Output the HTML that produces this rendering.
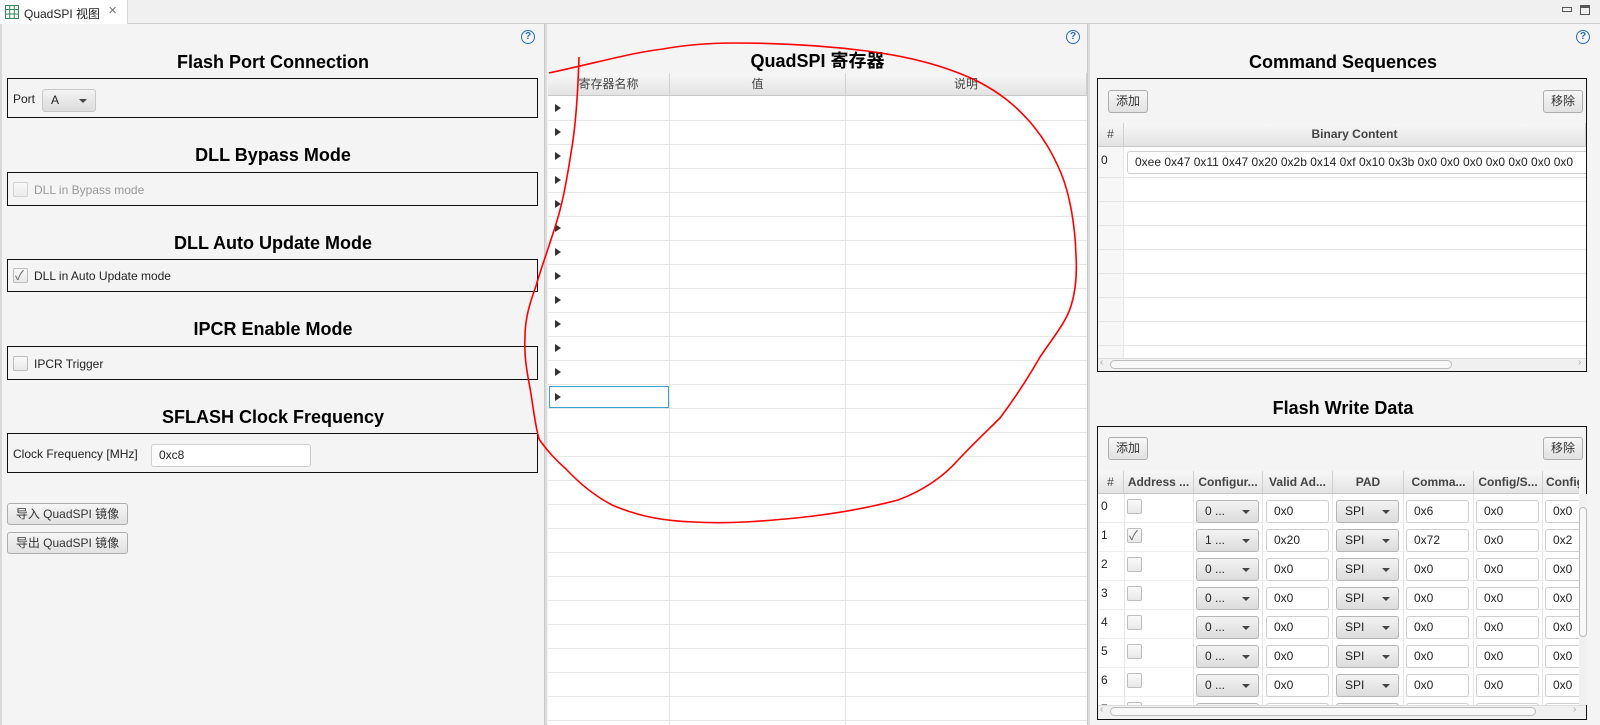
<!DOCTYPE html>
<html><head><meta charset="utf-8">
<style>
*{box-sizing:border-box;margin:0;padding:0}
body{width:1600px;height:725px;overflow:hidden;background:#f4f4f4;font-family:"Liberation Sans","Noto Sans CJK SC",sans-serif;font-size:12px;color:#222;position:relative}
.a{position:absolute}
.title{position:absolute;font-weight:bold;font-size:18px;text-align:center;color:#000;line-height:22px}
.box{position:absolute;border:1px solid #111}
.btn{position:absolute;border:1px solid #adadad;border-radius:3px;background:linear-gradient(#f6f6f6,#e2e2e2);font-size:12px;color:#333;text-align:center;line-height:20px}
.cb{position:absolute;width:15px;height:15px;border:1px solid #bdbdbd;border-radius:2px;background:linear-gradient(#fafafa,#e8e8e8)}
.help{position:absolute;width:14px;height:14px;border:1.5px solid #2b6cb0;border-radius:50%;color:#2b6cb0;font-size:10px;font-weight:bold;text-align:center;line-height:11px}
.hdr{position:absolute;background:linear-gradient(#f7f7f7,#e3e3e3);border-right:1px solid #d0d0d0;border-bottom:1px solid #c8c8c8;font-weight:bold;color:#444;text-align:center;line-height:23px;overflow:hidden;white-space:nowrap}
.hl{position:absolute;height:1px;background:#e6e6e6}
.vl{position:absolute;width:1px;background:#e6e6e6}
.tri{position:absolute;width:0;height:0;border-top:4px solid transparent;border-bottom:4px solid transparent;border-left:6px solid #333}
.tf{position:absolute;background:#fff;border:1px solid #cfcfcf;border-radius:3px;line-height:21px;padding-left:7px;color:#222}
.cmb{position:absolute;border:1px solid #b5b5b5;border-radius:3px;background:linear-gradient(#f3f3f3,#dcdcdc);line-height:21px;padding-left:8px;color:#222}
.cmb:after{content:"";position:absolute;right:8px;top:9px;border-left:4px solid transparent;border-right:4px solid transparent;border-top:4px solid #444}
</style></head><body>

<!-- tab bar -->
<div class="a" style="left:0;top:0;width:1600px;height:24px;background:#f0f0f0;border-bottom:1px solid #cfcfcf"></div>
<div class="a" style="left:0;top:0;width:128px;height:24px;background:#fff;border-right:1px solid #d8d8d8"></div>
<svg class="a" style="left:5px;top:5px" width="14" height="14" viewBox="0 0 14 14"><rect x="0.5" y="0.5" width="13" height="13" fill="#fff" stroke="#2e8b57"/><path d="M0 4.5H14M0 9H14M4.7 0V14M9.3 0V14" stroke="#2e8b57"/></svg>
<div class="a" style="left:24px;top:5px;font-size:12px;color:#222">QuadSPI 视图</div>
<div class="a" style="left:108px;top:4px;font-size:11px;color:#777">✕</div>
<div class="a" style="left:1562px;top:7px;width:10px;height:5px;border:1.5px solid #555"></div>
<div class="a" style="left:1580px;top:5px;width:10px;height:10px;border:1.5px solid #555;border-top-width:3px"></div>

<!-- panel dividers -->
<div class="a" style="left:0;top:24px;width:2px;height:701px;background:#d8d8d8"></div>
<div class="a" style="left:544px;top:24px;width:3px;height:701px;background:#dcdcdc;border-left:1px solid #c8c8c8"></div>
<div class="a" style="left:1087px;top:24px;width:3px;height:701px;background:#dcdcdc;border-left:1px solid #c8c8c8"></div>

<!-- LEFT PANEL -->
<div class="help" style="left:521px;top:30px">?</div>
<div class="title" style="left:2px;top:51px;width:542px">Flash Port Connection</div>
<div class="box" style="left:7px;top:78px;width:531px;height:40px"></div>
<div class="a" style="left:13px;top:92px">Port</div>
<div class="cmb" style="left:42px;top:89px;width:54px;height:23px;border-color:#c8c8c8">A</div>

<div class="title" style="left:2px;top:144px;width:542px">DLL Bypass Mode</div>
<div class="box" style="left:7px;top:172px;width:531px;height:34px"></div>
<div class="cb" style="left:13px;top:182px;opacity:.6"></div>
<div class="a" style="left:34px;top:183px;color:#999">DLL in Bypass mode</div>

<div class="title" style="left:2px;top:232px;width:542px">DLL Auto Update Mode</div>
<div class="box" style="left:7px;top:259px;width:531px;height:33px"></div>
<div class="cb" style="left:13px;top:268px"></div>
<div class="a" style="left:15px;top:265px;font-size:13px;color:#666">✓</div>
<div class="a" style="left:34px;top:269px">DLL in Auto Update mode</div>

<div class="title" style="left:2px;top:318px;width:542px">IPCR Enable Mode</div>
<div class="box" style="left:7px;top:346px;width:531px;height:34px"></div>
<div class="cb" style="left:13px;top:356px"></div>
<div class="a" style="left:34px;top:357px">IPCR Trigger</div>

<div class="title" style="left:2px;top:406px;width:542px">SFLASH Clock Frequency</div>
<div class="box" style="left:7px;top:433px;width:531px;height:40px"></div>
<div class="a" style="left:13px;top:447px">Clock Frequency [MHz]</div>
<div class="tf" style="left:151px;top:444px;width:160px;height:23px">0xc8</div>

<div class="btn" style="left:7px;top:503px;width:121px;height:22px">导入 QuadSPI 镜像</div>
<div class="btn" style="left:7px;top:532px;width:121px;height:22px">导出 QuadSPI 镜像</div>

<!-- MIDDLE PANEL -->
<div class="a" style="left:548px;top:96px;width:539px;height:629px;background:#fff"></div>
<div class="help" style="left:1066px;top:30px">?</div>
<div class="title" style="left:548px;top:50px;width:539px">QuadSPI 寄存器</div>
<div class="hdr" style="left:548px;top:73px;width:122px;height:23px;font-weight:normal">寄存器名称</div>
<div class="hdr" style="left:670px;top:73px;width:176px;height:23px;font-weight:normal">值</div>
<div class="hdr" style="left:846px;top:73px;width:241px;height:23px;font-weight:normal">说明</div>
<div class="vl" style="left:669px;top:96px;height:629px"></div>
<div class="vl" style="left:845px;top:96px;height:629px"></div>
<div class="hl" style="left:548px;top:120px;width:539px"></div>
<div class="hl" style="left:548px;top:144px;width:539px"></div>
<div class="hl" style="left:548px;top:168px;width:539px"></div>
<div class="hl" style="left:548px;top:192px;width:539px"></div>
<div class="hl" style="left:548px;top:216px;width:539px"></div>
<div class="hl" style="left:548px;top:240px;width:539px"></div>
<div class="hl" style="left:548px;top:264px;width:539px"></div>
<div class="hl" style="left:548px;top:288px;width:539px"></div>
<div class="hl" style="left:548px;top:312px;width:539px"></div>
<div class="hl" style="left:548px;top:336px;width:539px"></div>
<div class="hl" style="left:548px;top:360px;width:539px"></div>
<div class="hl" style="left:548px;top:384px;width:539px"></div>
<div class="hl" style="left:548px;top:408px;width:539px"></div>
<div class="hl" style="left:548px;top:432px;width:539px"></div>
<div class="hl" style="left:548px;top:456px;width:539px"></div>
<div class="hl" style="left:548px;top:480px;width:539px"></div>
<div class="hl" style="left:548px;top:504px;width:539px"></div>
<div class="hl" style="left:548px;top:528px;width:539px"></div>
<div class="hl" style="left:548px;top:552px;width:539px"></div>
<div class="hl" style="left:548px;top:576px;width:539px"></div>
<div class="hl" style="left:548px;top:600px;width:539px"></div>
<div class="hl" style="left:548px;top:624px;width:539px"></div>
<div class="hl" style="left:548px;top:648px;width:539px"></div>
<div class="hl" style="left:548px;top:672px;width:539px"></div>
<div class="hl" style="left:548px;top:696px;width:539px"></div>
<div class="hl" style="left:548px;top:720px;width:539px"></div>
<div class="tri" style="left:555px;top:104px"></div>
<div class="tri" style="left:555px;top:128px"></div>
<div class="tri" style="left:555px;top:152px"></div>
<div class="tri" style="left:555px;top:176px"></div>
<div class="tri" style="left:555px;top:200px"></div>
<div class="tri" style="left:555px;top:224px"></div>
<div class="tri" style="left:555px;top:248px"></div>
<div class="tri" style="left:555px;top:272px"></div>
<div class="tri" style="left:555px;top:296px"></div>
<div class="tri" style="left:555px;top:320px"></div>
<div class="tri" style="left:555px;top:344px"></div>
<div class="tri" style="left:555px;top:368px"></div>
<div class="a" style="left:549px;top:386px;width:120px;height:22px;border:1px solid #3ca0d0;background:#fff"></div>
<div class="tri" style="left:555px;top:393px"></div>

<!-- RIGHT PANEL -->
<div class="help" style="left:1576px;top:30px">?</div>
<div class="title" style="left:1090px;top:51px;width:506px">Command Sequences</div>
<div class="box" style="left:1097px;top:78px;width:490px;height:294px"></div>
<div class="btn" style="left:1108px;top:90px;width:40px;height:23px">添加</div>
<div class="btn" style="left:1543px;top:90px;width:40px;height:23px">移除</div>
<div class="a" style="left:1098px;top:123px;width:488px;height:235px;background:#fff;overflow:hidden">
  <div class="hdr" style="left:0;top:0;width:26px;height:24px;font-weight:normal">#</div>
  <div class="hdr" style="left:26px;top:0;width:462px;height:24px">Binary Content</div>
  <div class="a" style="left:0;top:24px;width:26px;height:211px;background:#f7f7f7;border-right:1px solid #e6e6e6"></div>
  <div class="a" style="left:3px;top:30px">0</div>
  <div class="tf" style="left:29px;top:28px;width:470px;height:23px;white-space:nowrap;overflow:hidden">0xee 0x47 0x11 0x47 0x20 0x2b 0x14 0xf 0x10 0x3b 0x0 0x0 0x0 0x0 0x0 0x0 0x0</div>
  <div class="hl" style="left:0;top:54px;width:488px"></div>
  <div class="hl" style="left:0;top:78px;width:488px"></div>
  <div class="hl" style="left:0;top:102px;width:488px"></div>
  <div class="hl" style="left:0;top:126px;width:488px"></div>
  <div class="hl" style="left:0;top:150px;width:488px"></div>
  <div class="hl" style="left:0;top:174px;width:488px"></div>
  <div class="hl" style="left:0;top:198px;width:488px"></div>
  <div class="hl" style="left:0;top:222px;width:488px"></div>
</div>
<div class="a" style="left:1098px;top:358px;width:488px;height:13px;background:#f0f0f0;border-top:1px solid #ddd"></div>
<div class="a" style="left:1110px;top:360px;width:342px;height:9px;border:1px solid #bbb;border-radius:5px;background:#f8f8f8"></div>
<div class="a" style="left:1100px;top:357px;font-size:10px;color:#aaa">‹</div>
<div class="a" style="left:1578px;top:357px;font-size:10px;color:#aaa">›</div>

<div class="title" style="left:1090px;top:397px;width:506px">Flash Write Data</div>
<div class="box" style="left:1097px;top:426px;width:490px;height:294px"></div>
<div class="btn" style="left:1108px;top:437px;width:40px;height:23px">添加</div>
<div class="btn" style="left:1543px;top:437px;width:40px;height:23px">移除</div>
<div class="a" style="left:1098px;top:471px;width:481px;height:234px;background:#fff;overflow:hidden">
  <div class="hdr" style="left:0;top:0;width:26px;height:23px;font-weight:normal">#</div>
  <div class="hdr" style="left:26px;top:0;width:70px;height:23px">Address ...</div>
  <div class="hdr" style="left:96px;top:0;width:69px;height:23px">Configur...</div>
  <div class="hdr" style="left:165px;top:0;width:70px;height:23px">Valid Ad...</div>
  <div class="hdr" style="left:235px;top:0;width:71px;height:23px">PAD</div>
  <div class="hdr" style="left:306px;top:0;width:70px;height:23px">Comma...</div>
  <div class="hdr" style="left:376px;top:0;width:69px;height:23px">Config/S...</div>
  <div class="hdr" style="left:445px;top:0;width:60px;height:23px;text-align:left;padding-left:3px">Configu</div>
  <div class="vl" style="left:26px;top:23px;height:211px"></div>
  <div class="vl" style="left:95px;top:23px;height:211px"></div>
  <div class="vl" style="left:164px;top:23px;height:211px"></div>
  <div class="vl" style="left:234px;top:23px;height:211px"></div>
  <div class="vl" style="left:305px;top:23px;height:211px"></div>
  <div class="vl" style="left:375px;top:23px;height:211px"></div>
  <div class="vl" style="left:444px;top:23px;height:211px"></div>
  <!-- rows -->
  <div class="a" style="left:0;top:23px;width:481px;height:29px;border-bottom:1px solid #eee">
    <div class="a" style="left:3px;top:5px">0</div><div class="cb" style="left:29px;top:5px"></div>
    <div class="cmb" style="left:98px;top:6px;width:63px;height:23px">0 ...</div>
    <div class="tf" style="left:168px;top:6px;width:63px;height:23px">0x0</div>
    <div class="cmb" style="left:238px;top:6px;width:63px;height:23px">SPI</div>
    <div class="tf" style="left:308px;top:6px;width:63px;height:23px">0x6</div>
    <div class="tf" style="left:378px;top:6px;width:63px;height:23px">0x0</div>
    <div class="tf" style="left:447px;top:6px;width:63px;height:23px">0x0</div>
  </div>
  <div class="a" style="left:0;top:52px;width:481px;height:29px;border-bottom:1px solid #eee">
    <div class="a" style="left:3px;top:5px">1</div><div class="cb" style="left:29px;top:5px"></div><div class="a" style="left:31px;top:2px;font-size:13px;color:#666">✓</div>
    <div class="cmb" style="left:98px;top:6px;width:63px;height:23px">1 ...</div>
    <div class="tf" style="left:168px;top:6px;width:63px;height:23px">0x20</div>
    <div class="cmb" style="left:238px;top:6px;width:63px;height:23px">SPI</div>
    <div class="tf" style="left:308px;top:6px;width:63px;height:23px">0x72</div>
    <div class="tf" style="left:378px;top:6px;width:63px;height:23px">0x0</div>
    <div class="tf" style="left:447px;top:6px;width:63px;height:23px">0x2</div>
  </div>
  <div class="a" style="left:0;top:81px;width:481px;height:29px;border-bottom:1px solid #eee">
    <div class="a" style="left:3px;top:5px">2</div><div class="cb" style="left:29px;top:5px"></div>
    <div class="cmb" style="left:98px;top:6px;width:63px;height:23px">0 ...</div>
    <div class="tf" style="left:168px;top:6px;width:63px;height:23px">0x0</div>
    <div class="cmb" style="left:238px;top:6px;width:63px;height:23px">SPI</div>
    <div class="tf" style="left:308px;top:6px;width:63px;height:23px">0x0</div>
    <div class="tf" style="left:378px;top:6px;width:63px;height:23px">0x0</div>
    <div class="tf" style="left:447px;top:6px;width:63px;height:23px">0x0</div>
  </div>
  <div class="a" style="left:0;top:110px;width:481px;height:29px;border-bottom:1px solid #eee">
    <div class="a" style="left:3px;top:5px">3</div><div class="cb" style="left:29px;top:5px"></div>
    <div class="cmb" style="left:98px;top:6px;width:63px;height:23px">0 ...</div>
    <div class="tf" style="left:168px;top:6px;width:63px;height:23px">0x0</div>
    <div class="cmb" style="left:238px;top:6px;width:63px;height:23px">SPI</div>
    <div class="tf" style="left:308px;top:6px;width:63px;height:23px">0x0</div>
    <div class="tf" style="left:378px;top:6px;width:63px;height:23px">0x0</div>
    <div class="tf" style="left:447px;top:6px;width:63px;height:23px">0x0</div>
  </div>
  <div class="a" style="left:0;top:139px;width:481px;height:29px;border-bottom:1px solid #eee">
    <div class="a" style="left:3px;top:5px">4</div><div class="cb" style="left:29px;top:5px"></div>
    <div class="cmb" style="left:98px;top:6px;width:63px;height:23px">0 ...</div>
    <div class="tf" style="left:168px;top:6px;width:63px;height:23px">0x0</div>
    <div class="cmb" style="left:238px;top:6px;width:63px;height:23px">SPI</div>
    <div class="tf" style="left:308px;top:6px;width:63px;height:23px">0x0</div>
    <div class="tf" style="left:378px;top:6px;width:63px;height:23px">0x0</div>
    <div class="tf" style="left:447px;top:6px;width:63px;height:23px">0x0</div>
  </div>
  <div class="a" style="left:0;top:168px;width:481px;height:29px;border-bottom:1px solid #eee">
    <div class="a" style="left:3px;top:5px">5</div><div class="cb" style="left:29px;top:5px"></div>
    <div class="cmb" style="left:98px;top:6px;width:63px;height:23px">0 ...</div>
    <div class="tf" style="left:168px;top:6px;width:63px;height:23px">0x0</div>
    <div class="cmb" style="left:238px;top:6px;width:63px;height:23px">SPI</div>
    <div class="tf" style="left:308px;top:6px;width:63px;height:23px">0x0</div>
    <div class="tf" style="left:378px;top:6px;width:63px;height:23px">0x0</div>
    <div class="tf" style="left:447px;top:6px;width:63px;height:23px">0x0</div>
  </div>
  <div class="a" style="left:0;top:197px;width:481px;height:29px;border-bottom:1px solid #eee">
    <div class="a" style="left:3px;top:5px">6</div><div class="cb" style="left:29px;top:5px"></div>
    <div class="cmb" style="left:98px;top:6px;width:63px;height:23px">0 ...</div>
    <div class="tf" style="left:168px;top:6px;width:63px;height:23px">0x0</div>
    <div class="cmb" style="left:238px;top:6px;width:63px;height:23px">SPI</div>
    <div class="tf" style="left:308px;top:6px;width:63px;height:23px">0x0</div>
    <div class="tf" style="left:378px;top:6px;width:63px;height:23px">0x0</div>
    <div class="tf" style="left:447px;top:6px;width:63px;height:23px">0x0</div>
  </div>
  <div class="a" style="left:0;top:226px;width:481px;height:29px">
    <div class="a" style="left:3px;top:5px">7</div><div class="cb" style="left:29px;top:5px"></div>
    <div class="cmb" style="left:98px;top:6px;width:63px;height:23px">0 ...</div>
    <div class="tf" style="left:168px;top:6px;width:63px;height:23px">0x0</div>
    <div class="cmb" style="left:238px;top:6px;width:63px;height:23px">SPI</div>
    <div class="tf" style="left:308px;top:6px;width:63px;height:23px">0x0</div>
    <div class="tf" style="left:378px;top:6px;width:63px;height:23px">0x0</div>
    <div class="tf" style="left:447px;top:6px;width:63px;height:23px">0x0</div>
  </div>
</div>
<!-- v scrollbar -->
<div class="a" style="left:1579px;top:494px;width:8px;height:211px;background:#f0f0f0"></div>
<div class="a" style="left:1579px;top:507px;width:8px;height:130px;border:1px solid #bbb;border-radius:4px;background:#f8f8f8"></div>
<!-- h scrollbar -->
<div class="a" style="left:1098px;top:705px;width:488px;height:13px;background:#f0f0f0;border-top:1px solid #ddd"></div>
<div class="a" style="left:1110px;top:707px;width:426px;height:9px;border:1px solid #bbb;border-radius:5px;background:#f8f8f8"></div>
<div class="a" style="left:1100px;top:704px;font-size:10px;color:#aaa">‹</div>
<div class="a" style="left:1573px;top:704px;font-size:10px;color:#aaa">›</div>

<!-- red freehand annotation -->
<svg class="a" style="left:0;top:0" width="1600" height="725" viewBox="0 0 1600 725">
<path d="M579 57 C578 90 576 125 571 153 C566 185 562 205 556 224 C548 250 541 268 536 286 C529 305 525 320 525 337 C524 357 527 372 530 388 C533 405 535 425 539 439 C548 452 556 460 566 469 C580 484 595 496 612 505 C640 517 665 521 694 522 C730 524 765 521 796 518 C835 514 868 508 898 500 C925 490 945 475 959 459 C975 442 988 430 1000 418 C1015 398 1028 378 1040 357 C1055 335 1066 322 1071 306 C1076 290 1077 272 1076 255 C1075 225 1070 195 1061 173 C1052 152 1043 137 1030 122 C1015 105 1000 93 979 82 C945 65 905 56 867 51 C820 45 775 43 734 43 C705 43 685 45 663 49 C630 53 600 62 549 73" fill="none" stroke="#ff0000" stroke-width="1.6"/>
</svg>
</body></html>
